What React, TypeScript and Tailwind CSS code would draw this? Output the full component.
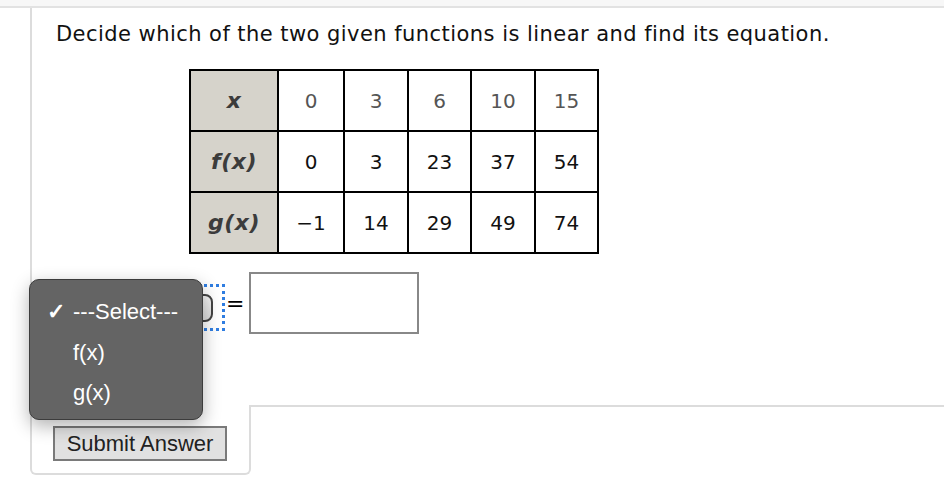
import React from "react";

const xs = ["0", "3", "6", "10", "15"];
const fs = ["0", "3", "23", "37", "54"];
const gs = ["\u22121", "14", "29", "49", "74"];

function HeadCell({ children }: { children: React.ReactNode }) {
  return (
    <div className="flex items-center justify-center bg-[#d6d3cb] text-[22px] font-bold italic tracking-[0.5px] text-[#3c3c3c]">
      {children}
    </div>
  );
}

function Cell({ v, muted }: { v: string; muted?: boolean }) {
  return (
    <div className={`flex items-center justify-center bg-white text-[20px] ${muted ? "text-[#555]" : "text-[#111]"}`}>
      {v}
    </div>
  );
}

export default function App() {
  return (
    <div className="relative h-[486px] w-[944px] overflow-hidden bg-white font-['DejaVu_Sans',sans-serif]">
      <div className="h-[8px] border-b-2 border-[#e2e2e2] bg-[#f7f7f7]" />

      <div className="ml-[30px] h-[399px] border-b-2 border-l-2 border-[#dcdcdc] pl-[24px]">
        <p className="pt-[14px] text-[21px] leading-[25px] tracking-[0.45px] text-[#111]">
          Decide which of the two given functions is linear and find its equation.
        </p>

        <div className="ml-[133px] mt-[22px] grid w-[410px] grid-cols-[86px_64px_62px_61px_62px_61px] grid-rows-[59px_59px_59px] gap-[2px] bg-black p-[2px]">
          <HeadCell>x</HeadCell>
          {xs.map((v, i) => <Cell key={"x" + i} v={v} muted />)}
          <HeadCell>f(x)</HeadCell>
          {fs.map((v, i) => <Cell key={"f" + i} v={v} />)}
          <HeadCell>g(x)</HeadCell>
          {gs.map((v, i) => <Cell key={"g" + i} v={v} />)}
        </div>

        <div className="mt-[18px] flex items-start">
          <div className="ml-[143px] mt-[12px] h-[47px] w-[26px] border-[3px] border-dotted border-[#2f7de1]">
            <div className="-ml-[60px] mt-[7px] h-[28px] w-[71px] rounded-[8px] border-2 border-[#444] bg-gradient-to-b from-[#f4f4f4] to-[#dcdcdc]" />
          </div>
          <span className="ml-[1px] mt-[22px] text-[22px] leading-[20px] text-black">=</span>
          <div className="ml-[5px] h-[62px] w-[170px] border-2 border-[#888] bg-white" />
        </div>
      </div>

      <div className="-mt-[2px] ml-[30px] h-[70px] w-[221px] rounded-b-[6px] border-b-2 border-l-2 border-r-2 border-[#dcdcdc] bg-white pl-[21px] pt-[21px]">
        <button className="h-[35px] w-[174px] border-2 border-[#7a7a7a] bg-[#e1e1e1] font-['Liberation_Sans',sans-serif] text-[22px] leading-[22px] text-[#222]">
          Submit Answer
        </button>
      </div>

      <div className="absolute left-[29px] top-[279px] h-[141px] w-[174px] rounded-[10px] border border-[#3c3c3c] bg-[#646464] pt-[16px] font-['Liberation_Sans',sans-serif] text-[22px] text-white shadow-[0_6px_18px_rgba(0,0,0,0.3)]">
        <div className="flex h-[30px] items-center">
          <span className="w-[43px] pl-[17px] text-[22px] font-bold">✓</span>
          <span>---Select---</span>
        </div>
        <div className="mt-[11px] flex h-[30px] items-center pl-[43px]">f(x)</div>
        <div className="mt-[10px] flex h-[30px] items-center pl-[43px]">g(x)</div>
      </div>
    </div>
  );
}
